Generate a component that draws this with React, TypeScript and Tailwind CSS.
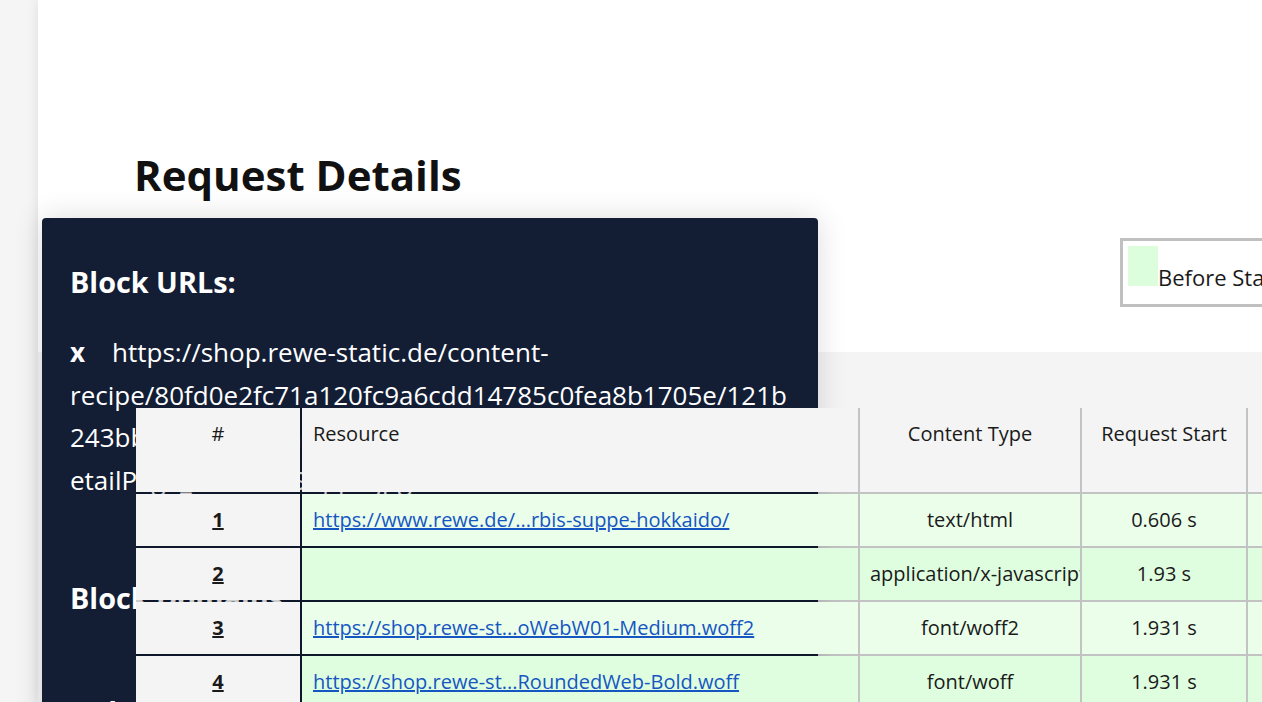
const rows = [
  { n: "1", url: "https://www.rewe.de/...rbis-suppe-hokkaido/", type: "text/html", start: "0.606 s", end: "0.61 s" },
  { n: "2", url: "", type: "application/x-javascript", start: "1.93 s", end: "1.934 s" },
  { n: "3", url: "https://shop.rewe-st...oWebW01-Medium.woff2", type: "font/woff2", start: "1.931 s", end: "1.95 s" },
  { n: "4", url: "https://shop.rewe-st...RoundedWeb-Bold.woff", type: "font/woff", start: "1.931 s", end: "1.952 s" },
];

const legend = [
  { label: "Before Start", color: "bg-[#dcfedd]" },
  { label: "DNS Lookup", color: "bg-[#fde7c9]" },
  { label: "Connect", color: "bg-[#cde4fb]" },
];

const cell = "border-b-2 border-r-2 border-black/20 bg-clip-padding";

export default function App() {
  return (
    <div className="flex h-[702px] w-[1262px] overflow-hidden bg-[#f5f5f5] font-['Open_Sans',sans-serif] text-[#1a1a1a]">
      <div className="w-[38px] shrink-0" />

      <div className="relative min-w-0 flex-1 bg-white shadow-[0_0_12px_rgba(0,0,0,0.1)]">
        <h1 className="ml-[96px] pt-[146px] text-[42px] font-bold leading-[57px] text-[#111]">Request Details</h1>

        <div className="mt-[35px] flex gap-4 whitespace-nowrap pl-[1082px]">
          {legend.map((item) => (
            <div key={item.label} className="border-[3px] border-[#c0c0c0] bg-white p-[5px] pb-3 text-[22px] leading-[30px]">
              <span className={`inline-block h-[40px] w-[30px] ${item.color}`} />
              {item.label}
            </div>
          ))}
        </div>

        <div className="mt-[45px] bg-[#f4f4f4] pl-[98px] pt-[56px]">
          <table className="relative z-20 w-[1312px] table-fixed border-separate border-spacing-0 text-[20px] leading-[28px]">
            <colgroup>
              <col className="w-[166px]" />
              <col className="w-[558px]" />
              <col className="w-[222px]" />
              <col className="w-[166px]" />
              <col className="w-[200px]" />
            </colgroup>
            <thead>
              <tr>
                <th className={`${cell} h-[86px] bg-[#f4f4f4] px-2.5 pt-3 text-center align-top font-normal`}>#</th>
                <th className={`${cell} bg-[#f4f4f4] pl-[11px] pt-3 text-left align-top font-normal`}>Resource</th>
                <th className={`${cell} bg-[#f4f4f4] px-2.5 pt-3 text-center align-top font-normal`}>Content Type</th>
                <th className={`${cell} bg-[#f4f4f4] px-2.5 pt-3 text-center align-top font-normal`}>Request Start</th>
                <th className={`${cell} bg-[#f4f4f4] px-2.5 pt-3 text-center align-top font-normal`}>Request Duration</th>
              </tr>
            </thead>
            <tbody>
              {rows.map((row, i) => {
                const tint = i % 2 === 0 ? "bg-[#eafeea]" : "bg-[#dffedf]";
                return (
                  <tr key={row.n}>
                    <td className={`${cell} h-[54px] bg-[#f4f4f4] text-center align-middle font-bold underline`}>{row.n}</td>
                    <td className={`${cell} ${tint} overflow-hidden whitespace-nowrap pl-[11px] align-middle`}>
                      {row.url ? <a className="text-[#1656c2] underline">{row.url}</a> : null}
                    </td>
                    <td className={`${cell} ${tint} overflow-hidden whitespace-nowrap px-2.5 text-center align-middle`}>{row.type}</td>
                    <td className={`${cell} ${tint} px-2.5 text-center align-middle`}>{row.start}</td>
                    <td className={`${cell} ${tint} px-2.5 text-center align-middle`}>{row.end}</td>
                  </tr>
                );
              })}
            </tbody>
          </table>
        </div>

        {/* settings popup that lies over the page */}
        <div className="absolute left-[4px] top-[218px] z-10 h-[600px] w-[776px] rounded-t-[4px] bg-[#131e35] px-[28px] pt-[44px] text-white shadow-[0_0_30px_rgba(0,0,0,0.14)]">
          <h2 className="text-[28.8px] font-bold leading-[39px]">Block URLs:</h2>
          <p className="mt-[30px] whitespace-nowrap text-[26px] leading-[42.67px]">
            <span className="mr-[27px] font-bold">x</span>
            https://shop.rewe-static.de/content-
            <br />
            recipe/80fd0e2fc71a120fc9a6cdd14785c0fea8b1705e/121b
            <br />
            243bb7c94f8e1b2a6d5e3f90c1a8/RecipeD
            <br />
            etailPage_Kuerbis-Suppe.jpg
          </p>
          <h2 className="mt-[76px] text-[28.8px] font-bold leading-[39px]">Block Domains:</h2>
          <h2 className="mt-[75px] text-[28.8px] font-bold leading-[39px]">Delay URLs:</h2>
        </div>
      </div>
    </div>
  );
}
